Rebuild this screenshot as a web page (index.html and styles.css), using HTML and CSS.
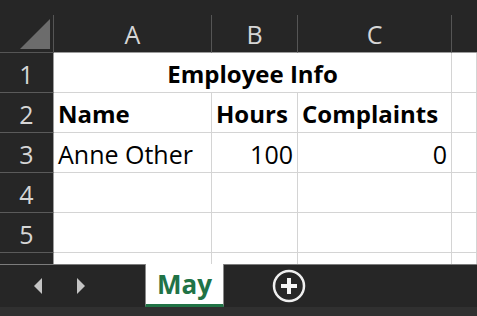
FILE: index.html
```html
<!DOCTYPE html>
<html lang="en">
<head>
    <meta charset="UTF-8">
    <title>Book1 - May</title>
    <link rel="stylesheet" href="styles.css">
</head>
<body>
    <div class="sheet">
        <!-- cabeçalho das colunas -->
        <div class="head corner"><span class="tri"></span></div>
        <div class="head">A</div>
        <div class="head">B</div>
        <div class="head">C</div>
        <div class="head last"></div>

        <div class="num">1</div>
        <div class="cell merged bold">Employee Info</div>
        <div class="cell"></div>

        <div class="num">2</div>
        <div class="cell bold">Name</div>
        <div class="cell bold">Hours</div>
        <div class="cell bold">Complaints</div>
        <div class="cell"></div>

        <div class="num">3</div>
        <div class="cell">Anne Other</div>
        <div class="cell right">100</div>
        <div class="cell right">0</div>
        <div class="cell"></div>

        <div class="num">4</div>
        <div class="cell"></div>
        <div class="cell"></div>
        <div class="cell"></div>
        <div class="cell"></div>

        <div class="num">5</div>
        <div class="cell"></div>
        <div class="cell"></div>
        <div class="cell"></div>
        <div class="cell"></div>

        <!-- linha 6 aparece cortada pela barra de abas -->
        <div class="num"></div>
        <div class="cell"></div>
        <div class="cell"></div>
        <div class="cell"></div>
        <div class="cell"></div>
    </div>

    <div class="tabbar">
        <div class="nav">
            <span class="arrow left"></span>
            <span class="arrow right"></span>
        </div>
        <div class="tab">May</div>
        <div class="add">
            <svg width="34" height="34" viewBox="0 0 34 34">
                <circle cx="17" cy="17" r="15" fill="none" stroke="#efefef" stroke-width="2.5"/>
                <rect x="9" y="15" width="16" height="4" fill="#f5f5f5"/>
                <rect x="15" y="9" width="4" height="16" fill="#f5f5f5"/>
            </svg>
        </div>
    </div>
    <div class="status"></div>
</body>
</html>
```

FILE: styles.css
```css
body {
    margin: 0;
    width: 477px;
    height: 316px;
    overflow: hidden;
    background-color: #262626;
    font-family: "Open Sans", "Liberation Sans", sans-serif;
}
.sheet {
    display: grid;
    grid-template-columns: 54px 158px 86px 154px 1fr;
    grid-template-rows: 53px repeat(6, 40px);
    height: 264px;
    overflow: hidden;
}
.head {
    align-self: end;
    height: 37px;
    border-right: 1px solid #555;
    border-bottom: 1px solid #9c9c9c;
    color: #d6d6d6;
    font-size: 25px;
    display: flex;
    align-items: center;
    justify-content: center;
}
.head.last {
    border-right: none;
}
.corner {
    justify-content: flex-end;
    align-items: flex-end;
    padding: 0 3px 3px 0;
    height: 34px;
    border-bottom-color: #555;
}
.tri {
    width: 30px;
    height: 30px;
    background-color: #6c6c6c;
    clip-path: polygon(100% 0, 100% 100%, 0 100%);
}
.num {
    border-right: 1px solid #9c9c9c;
    border-bottom: 1px solid #5a5a5a;
    color: #d6d6d6;
    font-size: 25px;
    display: flex;
    align-items: center;
    justify-content: center;
    padding-top: 2px;
}
.cell {
    background-color: white;
    border-right: 1px solid #d4d4d4;
    border-bottom: 1px solid #d4d4d4;
    color: #000;
    font-size: 25px;
    padding: 2px 4px 0 4px;
    display: flex;
    align-items: center;
    white-space: nowrap;
}
.bold {
    font-weight: bold;
    font-size: 24px;
}
.merged {
    grid-column: span 3;
    justify-content: center;
}
.right {
    justify-content: flex-end;
}
.tabbar {
    height: 42px;
    border-top: 1px solid #7c7c7c;
    display: flex;
    align-items: stretch;
}
.nav {
    width: 145px;
    display: flex;
    align-items: center;
    padding-left: 34px;
    gap: 35px;
    box-sizing: border-box;
}
.arrow {
    width: 0;
    height: 0;
    border-top: 8px solid transparent;
    border-bottom: 8px solid transparent;
}
.arrow.left {
    border-right: 8px solid #c4c4c4;
}
.arrow.right {
    border-left: 8px solid #c4c4c4;
}
.tab {
    margin-top: -1px;
    width: 77px;
    height: 40px;
    background-color: white;
    border-left: 1px solid #8a8a8a;
    border-right: 1px solid #8a8a8a;
    border-bottom: 3px solid #217346;
    color: #217346;
    font-size: 26px;
    font-weight: bold;
    display: flex;
    align-items: center;
    justify-content: center;
}
.add {
    margin-left: 48px;
    display: flex;
    align-items: center;
}
.status {
    height: 9px;
    background-color: #303030;
}
```
